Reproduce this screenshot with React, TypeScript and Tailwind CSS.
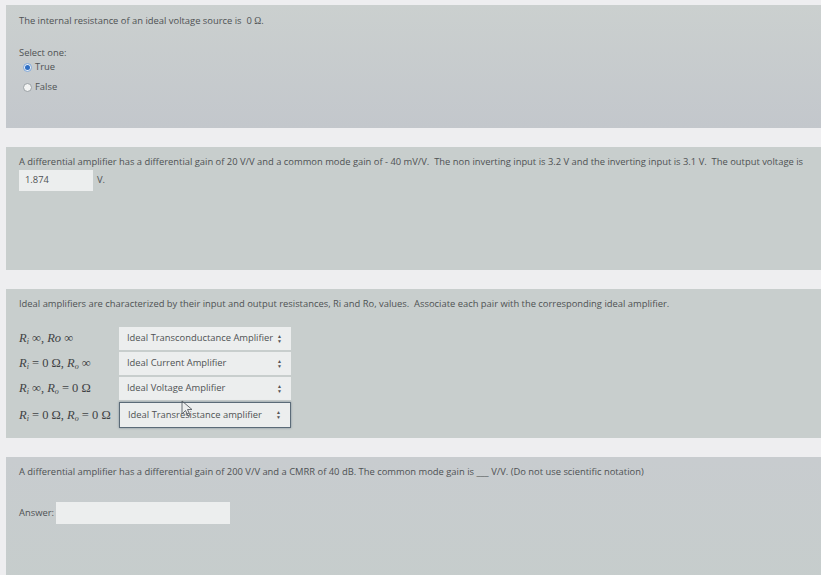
import React from 'react';

const sans = { fontFamily: '"Open Sans", "Noto Sans", sans-serif' };

const Panel: React.FC<{ h: string; children: React.ReactNode }> = ({ h, children }) => (
  <div className={`shrink-0 ml-[6px] pl-[13px] pr-2 ${h}`}>{children}</div>
);

const Radio: React.FC<{ checked?: boolean; label: string }> = ({ checked, label }) => (
  <div className="flex items-center gap-[3px] pl-[4px] h-[12px]">
    <span
      className={`w-[9px] h-[9px] rounded-full border flex items-center justify-center ${
        checked ? 'border-[#7ea6d8] bg-[#e8eef6]' : 'border-[#9aa0a4] bg-[#f2f3f3]'
      }`}
    >
      {checked && <span className="w-[5px] h-[5px] rounded-full bg-[#2f6fc4]" />}
    </span>
    <span>{label}</span>
  </div>
);

const R: React.FC<{ sub: string }> = ({ sub }) => (
  <span>
    <i>R</i>
    <sub className="text-[8px] italic">{sub}</sub>
  </span>
);

const Select: React.FC<{ value: string; focused?: boolean }> = ({ value, focused }) => (
  <div
    className={`relative w-[172px] flex items-center justify-between pl-[8px] pr-[9px] bg-[#eceeee] ${
      focused ? 'h-[26px] border border-[#5b6b78] shadow-[0_0_2px_rgba(60,80,100,0.5)]' : 'h-[23px]'
    }`}
  >
    <span>{value}</span>
    <span className="flex flex-col items-center leading-none text-[5px] text-[#555]">
      <span>▲</span>
      <span>▼</span>
    </span>
  </div>
);

const rows: { label: React.ReactNode; value: string; focused?: boolean }[] = [
  {
    label: (
      <>
        <R sub="i" /> ∞, <i>Ro</i> ∞
      </>
    ),
    value: 'Ideal Transconductance Amplifier',
  },
  {
    label: (
      <>
        <R sub="i" /> = 0 Ω, <R sub="o" /> ∞
      </>
    ),
    value: 'Ideal Current Amplifier',
  },
  {
    label: (
      <>
        <R sub="i" /> ∞, <R sub="o" /> = 0 Ω
      </>
    ),
    value: 'Ideal Voltage Amplifier',
  },
  {
    label: (
      <>
        <R sub="i" /> = 0 Ω, <R sub="o" /> = 0 Ω
      </>
    ),
    value: 'Ideal Transresistance amplifier',
    focused: true,
  },
];

export default function App() {
  return (
    <div
      className="w-[821px] h-[575px] overflow-hidden bg-[#eeeef0] pt-[5px] flex flex-col gap-[19px] text-[9.4px] text-[#4f5254]"
      style={sans}
    >
      {/* Question 1 */}
      <Panel h="h-[123px] pt-[10px] bg-gradient-to-b from-[#cbd0cf] to-[#c3c7cc]">
        <div className="h-[12px] leading-[12px]">
          The internal resistance of an ideal voltage source is&nbsp;&nbsp;0 <span className="font-serif">Ω</span>.
        </div>
        <div className="mt-[20px] h-[12px] leading-[12px]">Select one:</div>
        <div className="mt-[2px] flex flex-col gap-[8px]">
          <Radio checked label="True" />
          <Radio label="False" />
        </div>
      </Panel>

      {/* Question 2 */}
      <Panel h="h-[123px] pt-[9px] bg-[#c8cecd]">
        <div className="h-[12px] leading-[12px] whitespace-nowrap">
          A differential amplifier has a differential gain of 20 V/V and a common mode gain of - 40 mV/V.&nbsp; The non inverting
          input is 3.2 V and the inverting input is 3.1 V.&nbsp; The output voltage is
        </div>
        <div className="mt-[2px] flex items-start gap-[4px]">
          <div className="w-[74px] h-[21px] bg-[#eceeee] pl-[6px] flex items-center">1.874</div>
          <span className="pt-[3px]">V.</span>
        </div>
      </Panel>

      {/* Question 3 */}
      <Panel h="h-[149px] pt-[9px] bg-[#c8cecd]">
        <div className="h-[12px] leading-[12px] whitespace-nowrap">
          Ideal amplifiers are characterized by their input and output resistances, Ri and Ro, values.&nbsp; Associate each pair
          with the corresponding ideal amplifier.
        </div>
        <div className="mt-[17px] flex flex-col gap-[2px]">
          {rows.map((r, i) => (
            <div key={i} className="flex items-center">
              <div
                className="w-[100px] text-[12.5px] text-[#3f4244] whitespace-nowrap"
                style={{ fontFamily: '"Liberation Serif", serif' }}
              >
                {r.label}
              </div>
              <div className="relative">
                <Select value={r.value} focused={r.focused} />
                {r.focused && (
                  <svg className="absolute left-[62px] top-[-2px]" width="12" height="18" viewBox="0 0 12 18">
                    <path
                      d="M1 1 L1 14 L4.5 10.5 L7 16 L9 15 L6.5 9.5 L11 9.5 Z"
                      fill="none"
                      stroke="#5a6066"
                      strokeWidth="0.9"
                    />
                  </svg>
                )}
              </div>
            </div>
          ))}
        </div>
      </Panel>

      {/* Question 4 */}
      <Panel h="h-[130px] pt-[9px] bg-gradient-to-b from-[#c8cccf] to-[#c6cdcc]">
        <div className="h-[12px] leading-[12px] whitespace-nowrap">
          A differential amplifier has a differential gain of 200 V/V and a CMRR of 40 dB. The common mode gain is ___ V/V. (Do not
          use scientific notation)
        </div>
        <div className="mt-[24px] flex items-center gap-[2px]">
          <span>Answer:</span>
          <div className="w-[174px] h-[22px] bg-[#eceeee]" />
        </div>
      </Panel>
    </div>
  );
}
